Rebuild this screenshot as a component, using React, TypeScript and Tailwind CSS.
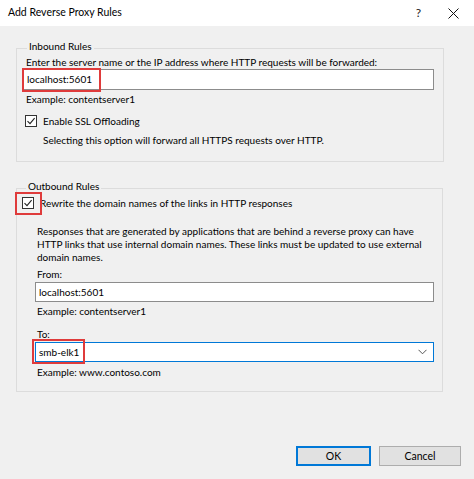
import React from "react";

const font = { fontFamily: 'Lato, "Noto Sans", sans-serif' };

const Checkbox = () => (
  <div className="flex h-[12px] w-[12px] shrink-0 items-center justify-center border border-[#333] bg-white">
    <svg width="10" height="10" viewBox="0 0 10 10" fill="none">
      <path d="M1.5 5.2 L4 7.6 L8.6 2.2" stroke="#222" strokeWidth="1.1" />
    </svg>
  </div>
);

const RedBox = ({ className }: { className: string }) => (
  <div className={`pointer-events-none absolute border-2 border-[#df3b3b] ${className}`} />
);

const App = () => {
  return (
    <div className="flex h-[479px] w-[474px] flex-col overflow-hidden bg-[#f0f0f0] text-[10px] text-black" style={font}>
      {/* Title bar */}
      <div className="flex h-[26px] shrink-0 items-center bg-white pl-[8px] pr-[15px]">
        <span className="text-[10.5px]">Add Reverse Proxy Rules</span>
        <span className="ml-auto mr-[27px] text-[12px] text-[#222]">?</span>
        <svg className="shrink-0" width="11" height="11" viewBox="0 0 11 11">
          <path d="M0.5 0.5 L10.5 10.5 M10.5 0.5 L0.5 10.5" stroke="#111" strokeWidth="1" />
        </svg>
      </div>

      <div className="flex flex-col pl-[16px] pt-[13px]">
        {/* Inbound */}
        <fieldset className="w-[428px] border border-[#dcdcdc] pb-[14px] pl-[6px] pr-[9px]">
          <legend className="ml-[4px] px-[2px] pb-[4px] leading-[14px]">Inbound Rules</legend>
          <div className="-mt-[2px] whitespace-nowrap pl-[3px] leading-[14px]">
            Enter the server name or the IP address where HTTP requests will be forwarded:
          </div>
          <div className="relative">
            <div className="flex h-[21px] items-center border border-[#8c8c8c] bg-white pl-[3px]">localhost:5601</div>
            <RedBox className="-left-[1px] -top-[1px] h-[24px] w-[79px]" />
          </div>
          <div className="mt-[2px] pl-[3px] leading-[14px]">Example: contentserver1</div>
          <div className="mt-[8px] flex items-center pl-[2px] leading-[14px]">
            <Checkbox />
            <span className="ml-[6px]">Enable SSL Offloading</span>
          </div>
          <div className="mt-[5px] whitespace-nowrap pl-[20px] leading-[14px]">Selecting this option will forward all HTTPS requests over HTTP.</div>
        </fieldset>

        {/* Outbound */}
        <fieldset className="mt-[17px] w-[427px] border border-[#dcdcdc] pb-[12px] pl-[5px] pr-[8px]">
          <legend className="ml-[4px] px-[2px] pb-[4px] leading-[14px]">Outbound Rules</legend>
          <div className="-mt-[1px] flex items-center leading-[14px]">
            <div className="relative">
              <Checkbox />
              <RedBox className="-left-[7px] -top-[5px] h-[23px] w-[27px]" />
            </div>
            <span className="ml-[6px] whitespace-nowrap">Rewrite the domain names of the links in HTTP responses</span>
          </div>
          <div className="pl-[13px]">
            <div className="mt-[15px] whitespace-nowrap pl-[2px] leading-[13px]">
              Responses that are generated by applications that are behind a reverse proxy can have
              <br />
              HTTP links that use internal domain names. These links must be updated to use external
              <br />
              domain names.
            </div>
            <div className="mt-[3px] pl-[2px] leading-[14px]">From:</div>
            <div className="mt-[1px] flex h-[20px] items-center border border-[#8c8c8c] bg-white pl-[3px]">localhost:5601</div>
            <div className="mt-[2px] pl-[2px] leading-[14px]">Example: contentserver1</div>
            <div className="mt-[9px] pl-[2px] leading-[14px]">To:</div>
            <div className="relative mt-[1px]">
              <div className="flex h-[20px] items-center border border-[#0078d7] bg-white pl-[3px] pr-[6px]">
                <span>smb-elk1</span>
                <svg className="ml-auto" width="9" height="6" viewBox="0 0 9 6" fill="none">
                  <path d="M0.5 0.8 L4.5 4.8 L8.5 0.8" stroke="#555" strokeWidth="1" />
                </svg>
              </div>
              <RedBox className="-left-[3px] -top-[3px] h-[25px] w-[53px]" />
            </div>
            <div className="mt-[3px] pl-[2px] leading-[14px]">Example: www.contoso.com</div>
          </div>
        </fieldset>
      </div>

      {/* Buttons */}
      <div className="mt-auto mb-[13px] flex justify-end gap-[8px] pr-[13px]">
        <button className="h-[20px] w-[75px] border border-[#0078d7] bg-[#e1e1e1] text-[10.5px] leading-[16px] outline outline-1 -outline-offset-2 outline-[#0078d7]">OK</button>
        <button className="h-[20px] w-[82px] border border-[#adadad] bg-[#e1e1e1] text-[10.5px] leading-[16px]">Cancel</button>
      </div>
    </div>
  );
};

export default App;
